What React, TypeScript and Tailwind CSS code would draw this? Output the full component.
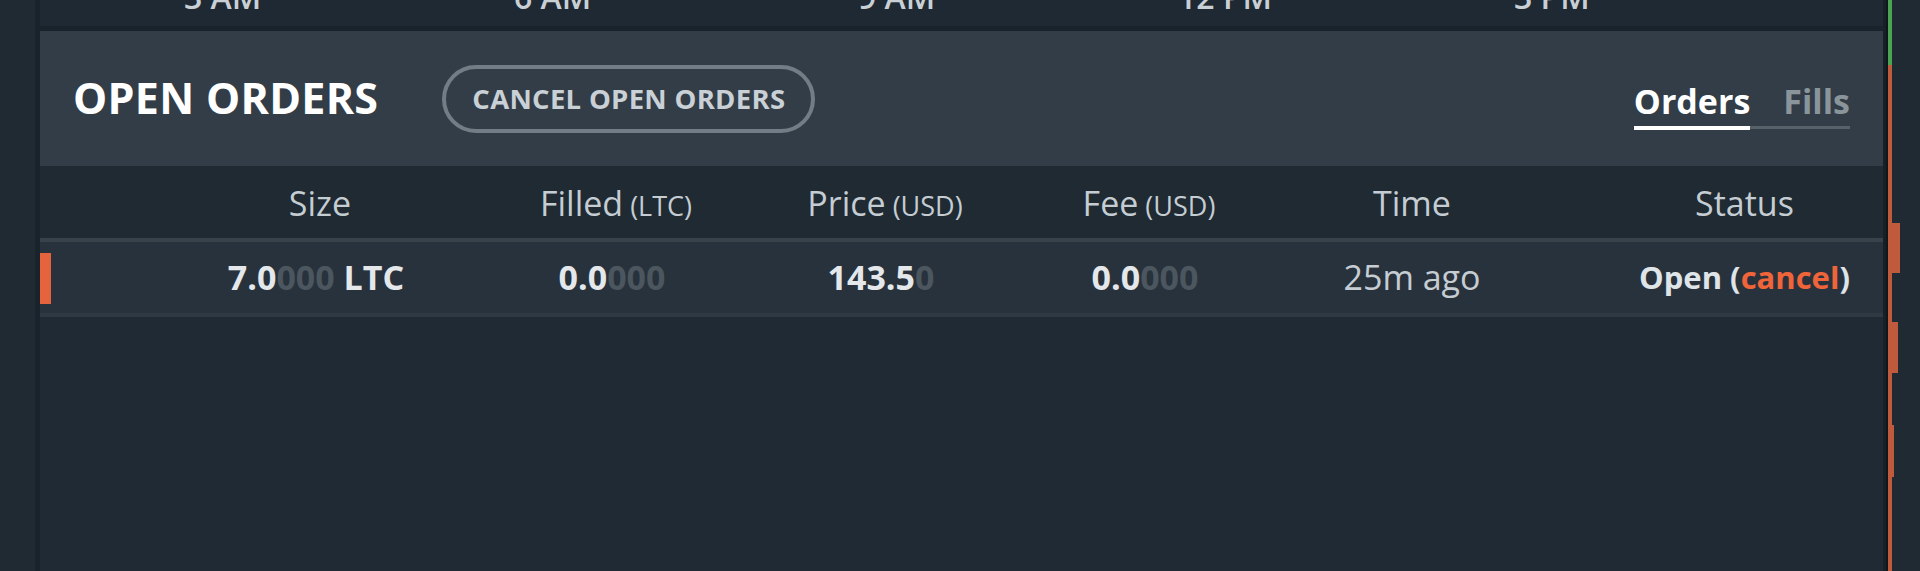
const timeLabels = [
  { label: '3 AM', left: 'left-[144px]' },
  { label: '6 AM', left: 'left-[474px]' },
  { label: '9 AM', left: 'left-[818px]' },
  { label: '12 PM', left: 'left-[1138px]' },
  { label: '3 PM', left: 'left-[1474px]' },
]

const columns = [
  { label: 'Size', unit: '' },
  { label: 'Filled', unit: '(LTC)' },
  { label: 'Price', unit: '(USD)' },
  { label: 'Fee', unit: '(USD)' },
  { label: 'Time', unit: '' },
  { label: 'Status', unit: '' },
]

function Num({ strong, faded }: { strong: string; faded: string }) {
  return (
    <span className="font-bold text-[#e4e8eb]">
      {strong}
      <span className="text-[#4b565f]">{faded}</span>
    </span>
  )
}

export default function App() {
  return (
    <div className="w-[1920px] h-[571px] flex overflow-hidden bg-[#1f2a33] font-['Open_Sans',sans-serif]">
      {/* left rail */}
      <div className="w-[35px] shrink-0 bg-[#1f2a33]" />
      <div className="w-[5px] shrink-0 bg-[#19232b]" />

      {/* main */}
      <div className="w-[1843px] shrink-0 flex flex-col">
        {/* chart axis strip */}
        <div className="h-[26px] relative overflow-hidden bg-[#1f2933]">
          {timeLabels.map((t) => (
            <span
              key={t.label}
              className={`absolute ${t.left} -top-[27px] text-[32px] font-semibold text-[#c9d0d5]`}
            >
              {t.label}
            </span>
          ))}
        </div>
        <div className="h-[5px] bg-[#19232b]" />

        {/* header */}
        <div className="h-[135px] bg-[#323d47] flex items-center pl-[33px] pr-[33px]">
          <h2 className="text-[43px] font-bold text-white tracking-[0.3px]">OPEN ORDERS</h2>
          <button className="ml-[64px] h-[68px] px-[26px] rounded-full border-[4px] border-[#737d85] text-[27.5px] font-bold text-[#c9d0d6] tracking-[0.3px]">
            CANCEL OPEN ORDERS
          </button>
          <div className="ml-auto flex items-end mt-[12px]">
            <div className="flex flex-col items-stretch">
              <span className="text-[34px] font-bold text-white leading-[42px] pb-[4px]">Orders</span>
              <div className="h-[4px] bg-white" />
            </div>
            <div className="flex flex-col items-stretch">
              <span className="text-[34px] font-bold text-[#8a949b] leading-[42px] pb-[4px] pl-[33px]">Fills</span>
              <div className="h-[3px] mb-[0.5px] bg-[#56616a]" />
            </div>
          </div>
        </div>

        {/* column headers */}
        <div className="h-[72px] pt-[3px] grid grid-cols-[304px_288px_250px_278px_248px_1fr] pl-[128px] items-center text-[34px] text-[#c5cdd3]">
          {columns.map((c, i) => (
            <div key={c.label} className={`text-center whitespace-nowrap ${i === 5 ? 'pl-[70px]' : ''}`}>
              {c.label}
              {c.unit && <span className="text-[27px]"> {c.unit}</span>}
            </div>
          ))}
        </div>
        <div className="h-[4px] bg-[#37424b]" />

        {/* order row */}
        <div className="h-[71px] bg-[#28323c] relative grid grid-cols-[304px_288px_250px_278px_248px_1fr] pl-[128px] items-center text-[34px] whitespace-nowrap">
          <div className="absolute left-0 top-[11px] w-[11px] h-[51px] bg-[#e5643d]" />
          <div className="text-center -mt-[1px] -translate-x-[4px]">
            <Num strong="7.0" faded="000" />
            <span className="font-bold text-[#e4e8eb]"> LTC</span>
          </div>
          <div className="text-center -mt-[1px] -translate-x-[4px]">
            <Num strong="0.0" faded="000" />
          </div>
          <div className="text-center -mt-[1px] -translate-x-[4px]">
            <Num strong="143.5" faded="0" />
          </div>
          <div className="text-center -mt-[1px] -translate-x-[4px]">
            <Num strong="0.0" faded="000" />
          </div>
          <div className="text-center -mt-[1px] text-[#c5cdd3]">25m ago</div>
          <div className="text-center -mt-[1px] pl-[70px] font-bold text-[#dfe4e8] text-[31px]">
            Open (<span className="text-[#f0643a]">cancel</span>)
          </div>
        </div>
        <div className="h-[4px] bg-[#2e3942]" />
        <div className="flex-1 bg-[#1f2a34]" />
      </div>

      {/* right depth rail */}
      <div className="w-[3px] shrink-0 bg-[#172027]" />
      <div className="w-[2px] shrink-0 bg-[#10181e]" />
      <div className="w-[4px] shrink-0 flex flex-col">
        <div className="h-[65px] bg-[#4aa453]" />
        <div className="flex-1 bg-[#bf5a3d]" />
      </div>
      <div className="flex-1 relative bg-[#1f2a33]">
        <div className="absolute left-0 top-[223px] w-[8px] h-[50px] bg-[#bf5a3d]" />
        <div className="absolute left-0 top-[322px] w-[6px] h-[51px] bg-[#bf5a3d]" />
        <div className="absolute left-0 top-[425px] w-[2px] h-[52px] bg-[#bf5a3d]" />
      </div>
    </div>
  )
}
